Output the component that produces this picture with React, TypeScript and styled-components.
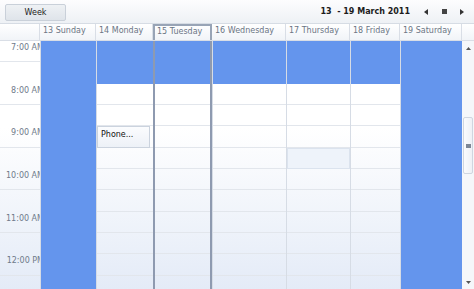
import React from "react";
import styled, { createGlobalStyle } from "styled-components";

const GlobalStyle = createGlobalStyle`
  html, body {
    margin: 0;
    padding: 0;
    background: #ffffff;
  }
  body {
    font-family: "DejaVu Sans", Verdana, sans-serif;
  }
`;

const SLOT = 21.33;
const BLUE = "#6495ed";

const Scheduler = styled.div`
  width: 474px;
  height: 289px;
  overflow: hidden;
  display: flex;
  flex-direction: column;
  background: #ffffff;
`;

const Toolbar = styled.div`
  height: 24px;
  flex: none;
  display: flex;
  align-items: center;
  justify-content: space-between;
  padding: 0 3px 0 5px;
  box-sizing: border-box;
  background: linear-gradient(#fdfdfe, #eef1f5);
  border-bottom: 1px solid #d6dce4;
`;

const ViewButton = styled.button`
  width: 61px;
  height: 17px;
  margin-top: 1px;
  padding: 0;
  border: 1px solid #c9d0d9;
  border-radius: 2px;
  background: linear-gradient(#eef1f4, #dfe4ea);
  font-family: "DejaVu Sans", Verdana, sans-serif;
  font-size: 8px;
  color: #222;
`;

const Nav = styled.div`
  display: flex;
  align-items: center;
`;

const Title = styled.div`
  font-size: 8px;
  font-weight: bold;
  color: #1c1c1c;
  white-space: pre;
  margin-right: 7px;
`;

const NavButton = styled.div`
  width: 18px;
  height: 14px;
  display: flex;
  align-items: center;
  justify-content: center;
`;

const HeaderRow = styled.div`
  height: 17px;
  flex: none;
  display: flex;
  background: linear-gradient(#ffffff, #f1f4f8);
  border-bottom: 1px solid #d9dee6;
  box-sizing: border-box;
`;

const Corner = styled.div`
  width: 40px;
  flex: none;
  border-right: 1px solid #d9dee6;
  box-sizing: border-box;
`;

const DayHeader = styled.div<{ $w: number; $today?: boolean }>`
  width: ${(p) => p.$w}px;
  flex: none;
  box-sizing: border-box;
  padding: 2px 0 0 3px;
  font-size: 8px;
  color: #6b7584;
  white-space: nowrap;
  overflow: hidden;
  border-right: 1px solid #d9dee6;
  ${(p) =>
    p.$today &&
    `border: 2px solid #98a4b6; border-bottom: none; padding: 1px 0 0 2px;`}
`;

const Body = styled.div`
  flex: 1;
  display: flex;
  overflow: hidden;
  background: linear-gradient(#ffffff 35%, #e4ebf7);
`;

const TimeColumn = styled.div`
  width: 40px;
  flex: none;
  overflow: hidden;
`;

const HourCell = styled.div`
  height: ${SLOT * 2}px;
  box-sizing: border-box;
  display: flex;
  flex-direction: column;
`;

const HourLabel = styled.div`
  height: ${SLOT}px;
  box-sizing: border-box;
  padding-top: 2px;
  margin-right: -4px;
  text-align: right;
  font-size: 8px;
  color: #6f7a8a;
  white-space: nowrap;
  border-bottom: 1px solid #e2e6ec;
`;

const DayColumn = styled.div<{ $w: number; $today?: boolean }>`
  width: ${(p) => p.$w}px;
  flex: none;
  box-sizing: border-box;
  position: relative;
  border-left: 1px solid #d6dce5;
  ${(p) => p.$today && `border-left: 2px solid #8e9ab0; border-right: 2px solid #8e9ab0;`}
`;

const Slot = styled.div<{ $blue?: boolean; $selected?: boolean }>`
  height: ${SLOT}px;
  box-sizing: border-box;
  border-bottom: 1px solid ${(p) => (p.$blue ? BLUE : "#e2e6ec")};
  background: ${(p) => (p.$blue ? BLUE : p.$selected ? "#eef3fa" : "transparent")};
  ${(p) => p.$selected && `border: 1px solid #dbe3ee;`}
`;

const Appointment = styled.div`
  position: absolute;
  left: 0;
  right: 3px;
  top: ${SLOT * 4}px;
  height: ${SLOT}px;
  box-sizing: border-box;
  padding: 3px 0 0 3px;
  border: 1px solid #cbd3de;
  background: linear-gradient(#fbfcfe, #edf1f7);
  font-size: 8px;
  color: #111;
`;

const Scrollbar = styled.div`
  width: 12px;
  flex: none;
  display: flex;
  flex-direction: column;
  align-items: center;
  background: #f5f7fa;
`;

const Arrow = styled.div`
  height: 14px;
  display: flex;
  align-items: center;
  justify-content: center;
`;

const Thumb = styled.div`
  margin-top: 62px;
  width: 10px;
  height: 57px;
  box-sizing: border-box;
  border: 1px solid #cfd6e0;
  border-radius: 2px;
  background: linear-gradient(90deg, #fafbfd, #eef1f6);
  display: flex;
  align-items: center;
  justify-content: center;
`;

const Grip = styled.div`
  width: 5px;
  height: 4px;
  background: #7d8796;
`;

const Spacer = styled.div`
  flex: 1;
`;

const days = [
  { name: "13 Sunday", w: 56, weekend: true },
  { name: "14 Monday", w: 57 },
  { name: "15 Tuesday", w: 59, today: true },
  { name: "16 Wednesday", w: 74 },
  { name: "17 Thursday", w: 64 },
  { name: "18 Friday", w: 50 },
  { name: "19 Saturday", w: 62, weekend: true },
];

const hours = ["7:00 AM", "8:00 AM", "9:00 AM", "10:00 AM", "11:00 AM", "12:00 PM"];
const slotCount = 12;

export default function App() {
  return (
    <>
      <GlobalStyle />
      <Scheduler>
        <Toolbar>
          <ViewButton>Week</ViewButton>
          <Nav>
            <Title>13  - 19 March 2011</Title>
            <NavButton>
              <svg width="4" height="6" viewBox="0 0 4 6">
                <path d="M4 0 L0 3 L4 6 Z" fill="#333" />
              </svg>
            </NavButton>
            <NavButton>
              <svg width="5" height="5" viewBox="0 0 5 5">
                <rect width="5" height="5" fill="#444" />
              </svg>
            </NavButton>
            <NavButton>
              <svg width="4" height="6" viewBox="0 0 4 6">
                <path d="M0 0 L4 3 L0 6 Z" fill="#333" />
              </svg>
            </NavButton>
          </Nav>
        </Toolbar>
        <HeaderRow>
          <Corner />
          {days.map((d) => (
            <DayHeader key={d.name} $w={d.w} $today={d.today}>
              {d.name}
            </DayHeader>
          ))}
        </HeaderRow>
        <Body>
          <TimeColumn>
            {hours.map((h) => (
              <HourCell key={h}>
                <HourLabel>{h}</HourLabel>
              </HourCell>
            ))}
          </TimeColumn>
          {days.map((d, di) => (
            <DayColumn key={d.name} $w={d.w} $today={d.today}>
              {Array.from({ length: slotCount }).map((_, i) => (
                <Slot
                  key={i}
                  $blue={d.weekend || i < 2}
                  $selected={di === 4 && i === 5}
                />
              ))}
              {di === 1 && <Appointment>Phone...</Appointment>}
            </DayColumn>
          ))}
          <Scrollbar>
            <Arrow>
              <svg width="5" height="3" viewBox="0 0 5 3">
                <path d="M0 3 L2.5 0 L5 3 Z" fill="#555" />
              </svg>
            </Arrow>
            <Thumb>
              <Grip />
            </Thumb>
            <Spacer />
            <Arrow>
              <svg width="5" height="3" viewBox="0 0 5 3">
                <path d="M0 0 L2.5 3 L5 0 Z" fill="#555" />
              </svg>
            </Arrow>
          </Scrollbar>
        </Body>
      </Scheduler>
    </>
  );
}
